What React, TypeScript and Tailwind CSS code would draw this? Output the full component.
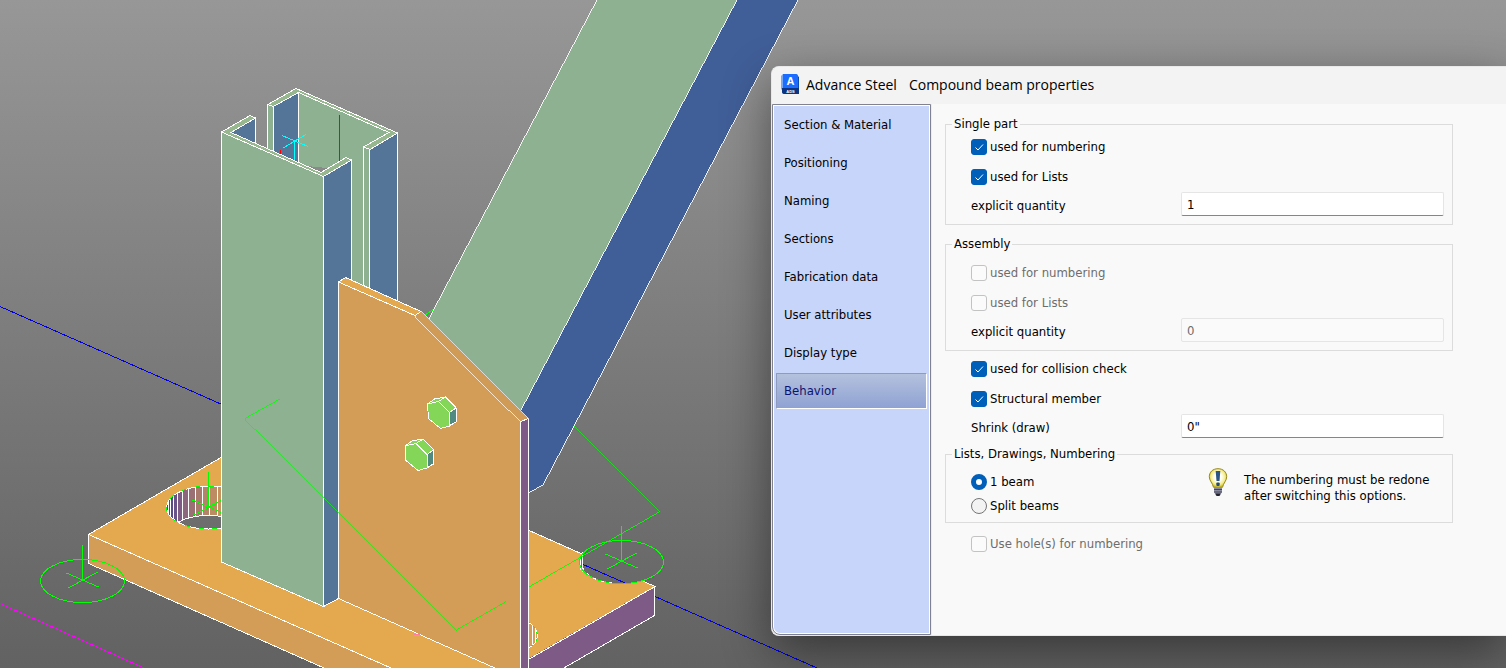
import React, { useState } from 'react';

const NAV_ITEMS = [
  'Section & Material',
  'Positioning',
  'Naming',
  'Sections',
  'Fabrication data',
  'User attributes',
  'Display type',
  'Behavior',
];

const AnchorCross: React.FC<{ x: number; y: number }> = ({ x, y }) => (
  <g transform={`translate(${x} ${y})`}>
    <path d="M0 -36V0M-16 -8L16 6M15 -9L-14 7" />
  </g>
);

const Bolt: React.FC<{ x: number; y: number }> = ({ x, y }) => (
  <g transform={`translate(${x} ${y})`} stroke="#fff" strokeWidth="1" strokeLinejoin="round">
    <path d="M0 7L7 2L18 0L28.500 10.500L28.500 24.500L22 29L13 31.500L1 21.500Z" fill="#84d658" />
    <path d="M22 15.500L28.500 11V25L22 28.500Z" fill="#508a80" />
    <path d="M0 7L11 4.500L22 15.500M11 4.500L18 0" fill="none" />
  </g>
);

const SLATS = [
  { x: 166, w: 4, color: '#54458c' },
  { x: 170, w: 3, color: '#5b4a8a' },
  { x: 173, w: 4, color: '#6a5188' },
  { x: 177, w: 5, color: '#7d5b84' },
  { x: 182, w: 6, color: '#8b667c' },
  { x: 188, w: 7, color: '#9a7074' },
  { x: 195, w: 7, color: '#a87a6e' },
  { x: 202, w: 8, color: '#b38468' },
  { x: 210, w: 7, color: '#bd8c62' },
  { x: 217, w: 8, color: '#c6935d' },
];

const ModelView: React.FC = () => (
  <svg
    className="absolute inset-0 h-full w-full"
    viewBox="0 0 1506 668"
    preserveAspectRatio="xMinYMin slice"
    shapeRendering="crispEdges"
    fill="none"
    aria-hidden="true"
  >
    <defs>
      <linearGradient id="sky" gradientUnits="userSpaceOnUse" x1="0" y1="0" x2="0" y2="668">
        <stop offset="0" stopColor="#979797" />
        <stop offset="1" stopColor="#626262" />
      </linearGradient>
      <clipPath id="holeLeft">
        <ellipse cx="208.500" cy="507.500" rx="42" ry="21.500" />
      </clipPath>
    </defs>
    <rect width="1506" height="668" fill="url(#sky)" />

    {/* axes */}
    <path d="M0 306.500L222 404.500M655 596.500L817 668" stroke="#0000e0" />
    <path d="M0 603.500L145 668.500" stroke="#f0f" />
    <path d="M425 315L434 309" stroke="#0f0" />

    {/* diagonal brace */}
    <path d="M597.500 0H737L521 410L429 318.500Z" fill="#8eb192" />
    <path d="M737 0H798L543 485L528 493V418L521 410Z" fill="#405e98" />
    <path
      d="M597.500 -1L429 318.500M737.500 -1L521 410M798.500 -1L543 485L528 493"
      stroke="#fff"
      strokeWidth="0.880"
    />

    {/* base plate */}
    <path d="M88.500 534.500L221 457.500L350 452L528 530L655 586L512 668H391Z" fill="#e4a84f" />
    <path d="M88.500 534.500L391 668H324L88.500 563.500Z" fill="#d49d57" />
    <path d="M655 586V615L563 668H512Z" fill="#7e5a86" />
    <path
      d="M221 457.500L88.500 534.500V563.500L324 668M88.500 534.500L391 668M528 530L655 586.500L512 669M654.500 586.500V615.500L563 668.500"
      stroke="#fff"
    />

    {/* left hole */}
    <g clipPath="url(#holeLeft)">
      {SLATS.map((slat) => (
        <rect key={slat.x} x={slat.x} y="485" width={slat.w} height="45" fill={slat.color} />
      ))}
      <path
        d="M168.500 485V530M170.500 485V530M173.500 485V530M177.500 485V530M182.500 485V530M188.500 485V530M195.500 485V530M202.500 485V530M209.500 485V530M217.500 485V530"
        stroke="#fff"
      />
      <ellipse cx="208.500" cy="537" rx="42" ry="21.500" fill="url(#sky)" stroke="#fff" />
    </g>
    <ellipse cx="208.500" cy="507.500" rx="42" ry="21.500" stroke="#fff" />
    <ellipse cx="208.500" cy="507.500" rx="42" ry="21.500" stroke="#0f0" strokeDasharray="5 9" />

    {/* right hole */}
    <ellipse cx="621.500" cy="562" rx="42" ry="21.500" fill="url(#sky)" />
    <path d="M580.500 556V570M582.500 552V572" stroke="#fff" />
    <path d="M583 564.500L625 583" stroke="#0000e0" />
    <ellipse cx="621.500" cy="562" rx="42" ry="21.500" stroke="#0f0" />
    <path d="M582 567Q590 581 612 583" stroke="#fff" strokeDasharray="3 5" />

    {/* front hole */}
    <path d="M528 622Q537 627 537.500 636Q537 644 528 648Z" fill="#d49d57" stroke="#fff" />
    <path d="M532.500 626V645M535.500 630V642" stroke="#fff" />
    <path d="M528 622Q537 627 537.500 636Q537 644 528 648" stroke="#0f0" strokeDasharray="2 5" />

    <g stroke="#0f0">
      <ellipse cx="82.500" cy="581" rx="42" ry="21.500" />
      <AnchorCross x={82.500} y={581} />
      <AnchorCross x={208.500} y={508} />
      <AnchorCross x={621.500} y={562} />
      <path d="M574 426.500L660 511.500" strokeWidth="0.700" />
      <path d="M660 511.500L528 587.500" strokeWidth="0.860" />
    </g>

    {/* back channel */}
    <path d="M298.500 93L389 132.500L370 149V290H345V170L298.500 165Z" fill="#8eb192" />
    <path d="M268 105L274 107V152L268 149Z" fill="#8eb192" />
    <path d="M273.500 107L298.500 93V163L273.500 152Z" fill="#547597" />
    <path d="M369.500 149.500L397.500 133V301L369.500 289Z" fill="#547597" />
    <path
      d="M268 104.500L296 88.500L397.500 133L370 149.500L363.500 147L389 132.500L298.500 92.500L273.500 106.500Z"
      fill="#97b78e"
      stroke="#fff"
    />
    <path d="M267.500 105V149M273.500 107V152M298.500 93V162M363.500 147V290M369.500 149V290M397.500 133V301" stroke="#fff" />
    <path d="M339.500 115V162M280.500 150V155" stroke="#f00" />
    <path d="M294.500 141V162M282 135.500L308 146.500M306 134.500L283 148" stroke="#0ff" />

    {/* front channel */}
    <path d="M231 132.500L255.500 118V144Z" fill="#547597" />
    <path d="M221.500 132L323.500 176.500V606.500L221.500 562Z" fill="#8eb192" />
    <path d="M323.500 176.500L351.500 160V300H338.500V598.500L323.500 606.500Z" fill="#547597" />
    <path
      d="M221.500 132L250 115.500L255.500 118L231 132.500L321 172.500L346 157.500L351.500 160L323.500 176.500Z"
      fill="#97b78e"
      stroke="#fff"
    />
    <path
      d="M255.500 118V143M221.500 132V562L323.500 606.500L338.500 598.500M323.500 176V606M351.500 160V290"
      stroke="#fff"
    />

    {/* gusset plate */}
    <path d="M338.500 282L415 315.500L520.500 421.500V668H496L338.500 598.500Z" fill="#d49d57" />
    <path d="M520.500 421.500L528.500 418V668H520.500Z" fill="#7e5a86" />
    <path d="M338.500 282L345.500 277.500L421 311.500L415 315.500Z" fill="#e4a84f" />
    <path d="M415 315.500L421 311.500L528.500 418.500L520.500 421.500Z" fill="#d09a57" />
    <path
      d="M496 668.500L338.500 598.500V282L345.500 277.500L421 311.500M528.500 418.500V668M338.500 282L415 315.500L421 311.500M520.500 668V421.500L528.500 418.500"
      stroke="#fff"
    />
    <path d="M421 311.500L528.500 418.500M415 315.500L520.500 421.500" stroke="#fff" strokeWidth="0.720" />
    <path d="M414 634H420" stroke="#ff7da0" />
    <path d="M245 418.500L455.500 630" stroke="#0f0" strokeWidth="0.700" />
    <path d="M280 399L245 418.500M455.500 630L506 601" stroke="#0f0" strokeWidth="0.860" />

    <Bolt x={427.500} y={397} />
    <Bolt x={405} y={439} />
  </svg>
);

const AppLogo: React.FC = () => (
  <svg className="mb-1 h-5 w-[18px] shrink-0" viewBox="0 0 18 20" aria-hidden="true">
    <path d="M0 2L2 0V17L0 15Z" fill="#77a8f5" />
    <path d="M15 0L18 3V20H3L1 18V14H17Z" fill="#0c4bb4" />
    <path d="M2 0H15Q17 0 17 2V14H2Z" fill="#1a6dff" />
    <path d="M1 14H18V20H3Q1 20 1 18Z" fill="#0b3582" />
    <text x="9.500" y="11" textAnchor="middle" fontSize="11" fontWeight="700" fill="#fff" fontFamily="Liberation Sans, sans-serif">
      A
    </text>
    <text x="9.500" y="18.500" textAnchor="middle" fontSize="4" fontWeight="700" fill="#fff" fontFamily="Liberation Sans, sans-serif">
      ADS
    </text>
  </svg>
);

const BulbIcon: React.FC = () => (
  <svg className="h-7 w-5 shrink-0" viewBox="0 0 20 28" aria-hidden="true">
    <defs>
      <radialGradient id="bulb" cx="0.5" cy="0.450" r="0.550">
        <stop offset="0.400" stopColor="#fffef0" />
        <stop offset="0.750" stopColor="#f3ec8a" />
        <stop offset="1" stopColor="#c9b81c" />
      </radialGradient>
    </defs>
    <path
      d="M10 0.700C4.700 0.700 1.300 4.200 1.300 8.700C1.300 12.700 4.500 14.800 5.500 19.300H14.500C15.500 14.800 18.700 12.700 18.700 8.700C18.700 4.200 15.300 0.700 10 0.700Z"
      fill="url(#bulb)"
      stroke="#97891f"
    />
    <path d="M7.700 3H12.300L11.500 13H8.500Z" fill="#2a5584" />
    <rect x="8.300" y="14.500" width="3.400" height="3.500" rx="1" fill="#234a78" />
    <path d="M6 19.500H14V24L12 27.500H8L6 24Z" fill="#8b8ba0" />
    <path d="M6 21.500H14M6 24H14" stroke="#45455c" />
    <path d="M7.500 25.500H12.500L11.500 28H8.500Z" fill="#22222e" />
  </svg>
);

interface CheckRowProps {
  label: string;
  defaultChecked?: boolean;
  disabled?: boolean;
}

const CheckRow: React.FC<CheckRowProps> = ({ label, defaultChecked, disabled }) => (
  <div className="flex h-[30px] items-center">
    <label className={`flex items-center gap-[3px] ${disabled ? 'text-[#6d6d6d]' : ''}`}>
      <span className="grid h-4 w-4">
        <input
          type="checkbox"
          defaultChecked={defaultChecked}
          disabled={disabled}
          className="peer col-start-1 row-start-1 h-4 w-4 appearance-none rounded-[3px] border border-[#868686] checked:border-[#005fb8] checked:bg-[#005fb8] disabled:border-[#c3c3c3] disabled:bg-[#fbfbfb]"
        />
        <svg
          className="pointer-events-none invisible col-start-1 row-start-1 h-4 w-4 peer-checked:visible"
          viewBox="0 0 16 16"
          fill="none"
          stroke="#fff"
        >
          <path d="M4.500 8.500L7 11L12 5.500" />
        </svg>
      </span>
      {label}
    </label>
  </div>
);

interface FieldRowProps {
  id: string;
  label: string;
  value: string;
  disabled?: boolean;
}

const FieldRow: React.FC<FieldRowProps> = ({ id, label, value, disabled }) => (
  <div className="flex h-7 items-center">
    <label htmlFor={id} className="w-[210px] shrink-0">
      {label}
    </label>
    <input
      id={id}
      type="text"
      defaultValue={value}
      disabled={disabled}
      className="mb-1 h-6 min-w-0 flex-1 rounded-[2px] border border-[#e5e5e5] border-b-[#868686] bg-white px-[5px] disabled:border-b-[#e5e5e5] disabled:bg-[#fafafa] disabled:text-[#6d6d6d]"
    />
  </div>
);

const Group: React.FC<{ title: string; children: React.ReactNode }> = ({ title, children }) => (
  <fieldset className="min-w-0 border border-[#dcdcdc] px-1.5 pb-1">
    <legend className="px-0.5 leading-[14px]">{title}</legend>
    <div className="pr-0.5 pl-[19px]">{children}</div>
  </fieldset>
);

const BeamMode: React.FC<{ label: string; defaultChecked?: boolean }> = ({ label, defaultChecked }) => (
  <label className="flex h-6 items-center gap-[3px]">
    <input
      type="radio"
      name="beam-mode"
      defaultChecked={defaultChecked}
      className="h-4 w-4 appearance-none rounded-full border border-[#757575] bg-[#f3f3f3] checked:border-[5px] checked:border-[#005fb8] checked:bg-white"
    />
    {label}
  </label>
);

const BehaviorPage: React.FC = () => (
  <div className="min-h-[531px] min-w-0 flex-1 border-l border-[#ececec] pt-[13px] pr-[53px] pl-[13px]">
    <Group title="Single part">
      <div className="pt-px">
        <CheckRow label="used for numbering" defaultChecked />
        <CheckRow label="used for Lists" defaultChecked />
        <FieldRow id="part-quantity" label="explicit quantity" value="1" />
      </div>
    </Group>
    <div className="mt-3">
      <Group title="Assembly">
        <div className="pt-[7px]">
          <CheckRow label="used for numbering" disabled />
          <CheckRow label="used for Lists" disabled />
          <FieldRow id="assembly-quantity" label="explicit quantity" value="0" disabled />
        </div>
      </Group>
    </div>
    <div className="mt-[3px] mb-[5px] pr-[9px] pl-[26px]">
      <CheckRow label="used for collision check" defaultChecked />
      <CheckRow label="Structural member" defaultChecked />
      <FieldRow id="shrink" label="Shrink (draw)" value={'0"'} />
    </div>
    <Group title="Lists, Drawings, Numbering">
      <div className="flex pt-[7px]">
        <div className="w-[237px] shrink-0 pt-0.5">
          <BeamMode label="1 beam" defaultChecked />
          <BeamMode label="Split beams" />
        </div>
        <BulbIcon />
        <p className="ml-4 pt-1 leading-4">
          The numbering must be redone
          <br />
          after switching this options.
        </p>
      </div>
    </Group>
    <div className="mt-1.5 pl-[26px]">
      <CheckRow label="Use hole(s) for numbering" disabled />
    </div>
  </div>
);

const PropertiesDialog: React.FC = () => {
  const [page, setPage] = useState('Behavior');

  return (
    <section className="absolute top-[66px] right-0 left-[771px] overflow-hidden rounded-l-lg border border-r-0 border-[#e8e8e8] bg-[#f9f9f9] font-['DejaVu_Sans_Condensed','Noto_Sans',sans-serif] text-[13px] text-black shadow-[0_16px_48px_rgba(0,0,0,0.45)]">
      <header className="flex h-[37px] items-center bg-[#f3f3f3] pl-[9px]">
        <AppLogo />
        <h1 className="ml-[7px] flex gap-3 pb-0.5 font-['Open_Sans',sans-serif] text-[14px]">
          <span>Advance Steel</span>
          <span>Compound beam properties</span>
        </h1>
      </header>
      <div className="flex">
        <nav className="flex w-[159px] shrink-0 flex-col gap-0.5 rounded-bl-lg border border-[#80838f] bg-[#c8d5fa] px-[3px] pt-0.5 shadow-[inset_0_0_0_1px_#fff]">
          {NAV_ITEMS.map((item) => (
            <button
              key={item}
              type="button"
              onClick={() => setPage(item)}
              className={`h-9 border px-[7px] text-left ${
                item === page
                  ? 'border-[#8d9bc0] border-r-white border-b-white bg-linear-to-b from-[#b4c1dd] to-[#8fa2d3] text-[#0a1470]'
                  : 'border-transparent'
              }`}
            >
              {item}
            </button>
          ))}
        </nav>
        <BehaviorPage />
      </div>
    </section>
  );
};

const App: React.FC = () => {
  return (
    <main className="relative min-h-screen overflow-hidden bg-[#626262]">
      <ModelView />
      <PropertiesDialog />
    </main>
  );
};

export default App;
